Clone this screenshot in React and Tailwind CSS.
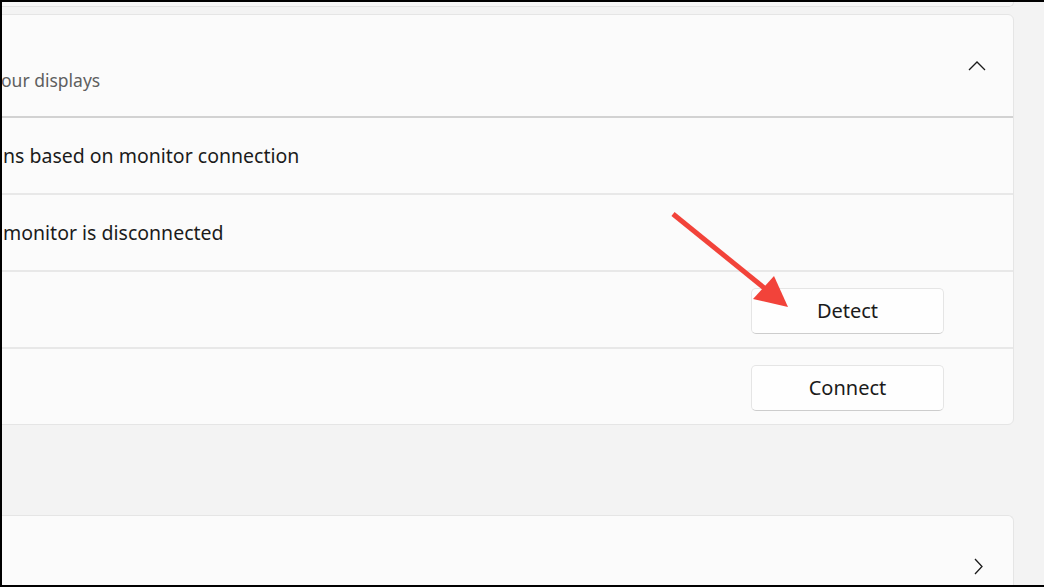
export default function App() {
  const font = { fontFamily: '"Noto Sans", "Open Sans", sans-serif' };
  return (
    <div
      className="relative h-[587px] w-[1044px] overflow-hidden border-y-2 border-l-2 border-black bg-[#f3f3f3] text-[#1b1b1b]"
      style={font}
    >
      <div className="pr-[30px]">
        <div className="-ml-4 h-[5px] rounded-b-[6px] border border-t-0 border-[#e3e3e3] bg-[#f7f7f7]" />
        <div className="-ml-4 mt-[7px] rounded-[6px] border border-[#e5e5e5] bg-[#fbfbfb]">
          <div className="flex h-[103px] items-center justify-between border-b-2 border-[#d2d2d2] pl-[14px] pr-[27px]">
            <div className="pt-[28px] text-[17.5px] leading-[24px] text-[#5f5f5f]">our displays</div>
            <svg width="18" height="10" viewBox="0 0 18 10" fill="none">
              <polyline points="1,9 9,1 17,9" stroke="#1b1b1b" strokeWidth="1.3" />
            </svg>
          </div>
          <div className="flex h-[77px] items-center border-b-2 border-[#e8e8e8] pl-[16px] text-[19.5px]">
            ns based on monitor connection
          </div>
          <div className="flex h-[77px] items-center border-b-2 border-[#e8e8e8] pl-[16px] text-[19.5px]">
            monitor is disconnected
          </div>
          <div className="flex h-[77px] items-center justify-end border-b-2 border-[#e8e8e8] pr-[69px] pt-[2px]">
            <button className="h-[46px] w-[193px] rounded-[5px] border border-[#e5e5e5] border-b-[#cdcdcd] bg-[#fefefe] text-[20px] text-[#1b1b1b]">
              Detect
            </button>
          </div>
          <div className="flex h-[75px] items-center justify-end pr-[69px] pt-[2px]">
            <button className="h-[46px] w-[193px] rounded-[5px] border border-[#e5e5e5] border-b-[#cdcdcd] bg-[#fefefe] text-[20px] text-[#1b1b1b]">
              Connect
            </button>
          </div>
        </div>
        <div className="-ml-4 mt-[90px] rounded-t-[6px] border border-b-0 border-[#e5e5e5] bg-[#fbfbfb]">
          <div className="flex h-[100px] items-center justify-end pr-[30px]">
            <svg width="9" height="17" viewBox="0 0 9 17" fill="none">
              <polyline points="1,1 8,8.5 1,16" stroke="#1b1b1b" strokeWidth="1.3" />
            </svg>
          </div>
        </div>
      </div>
      <svg
        className="pointer-events-none absolute left-0 top-0"
        width="1044"
        height="587"
        viewBox="2 2 1044 587"
      >
        <line x1="673" y1="214" x2="768" y2="291" stroke="#f2433a" strokeWidth="5" />
        <polygon points="753,299 774,276 788,307" fill="#f2433a" />
      </svg>
    </div>
  );
}
